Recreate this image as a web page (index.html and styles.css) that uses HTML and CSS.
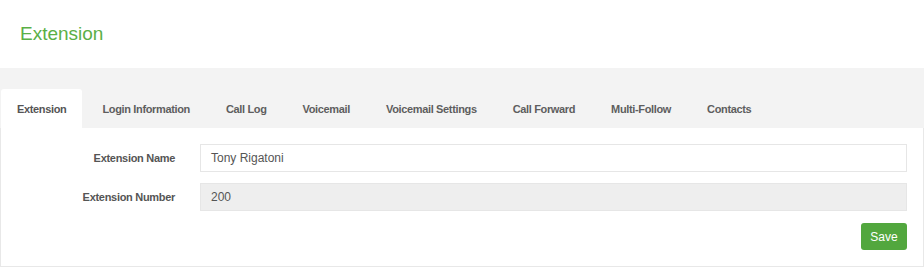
FILE: index.html
```html
<!DOCTYPE html>
<html>
<head>
<meta charset="utf-8">
<link rel="stylesheet" href="styles.css">
</head>
<body>
<header class="page-header">
  <h1 class="page-title">Extension</h1>
</header>
<div class="tab-band">
  <ul class="tabs">
    <li class="tab active">Extension</li>
    <li class="tab">Login Information</li>
    <li class="tab">Call Log</li>
    <li class="tab">Voicemail</li>
    <li class="tab">Voicemail Settings</li>
    <li class="tab">Call Forward</li>
    <li class="tab">Multi-Follow</li>
    <li class="tab">Contacts</li>
  </ul>
</div>
<section class="panel">
  <div class="form-row">
    <label class="form-label">Extension Name</label>
    <div class="form-field">Tony Rigatoni</div>
  </div>
  <div class="form-row">
    <label class="form-label">Extension Number</label>
    <div class="form-field readonly">200</div>
  </div>
  <div class="actions">
    <button class="btn-save">Save</button>
  </div>
</section>
</body>
</html>
```

FILE: styles.css
```css
* { box-sizing: border-box; }
html, body { margin: 0; padding: 0; background: #fff; }
body {
  font-family: "Liberation Sans", Arial, sans-serif;
  width: 924px;
  height: 267px;
  overflow: hidden;
}
.page-header {
  height: 68px;
  display: flex;
  align-items: center;
  padding: 0 0 1px 20px;
}
.page-title {
  margin: 0;
  font-size: 19px;
  font-weight: normal;
  color: #5aaf46;
}
.tab-band {
  background: #f3f3f3;
  padding-top: 21px;
}
.tabs {
  list-style: none;
  margin: 0;
  padding: 0 0 0 1px;
  display: flex;
  gap: 4px;
}
.tab {
  height: 39px;
  padding: 0 16px;
  display: flex;
  align-items: center;
  font-size: 11px;
  font-weight: bold;
  letter-spacing: -0.35px;
  color: #5e5e5e;
  border-radius: 3px 3px 0 0;
}
.tab.active {
  background: #fff;
  color: #555;
}
.panel {
  border: 1px solid #e8e8e8;
  border-top: none;
  height: 139px;
  padding: 16px 16px 0 0;
}
.form-row {
  display: flex;
  align-items: center;
  margin-bottom: 11px;
}
.form-label {
  width: 174px;
  text-align: right;
  font-size: 11px;
  font-weight: bold;
  letter-spacing: -0.3px;
  color: #555;
  margin-right: 25px;
}
.form-field {
  flex: 1;
  height: 28px;
  border: 1px solid #e6e6e6;
  background: #fff;
  display: flex;
  align-items: center;
  padding-left: 10px;
  font-size: 12px;
  color: #555;
}
.form-field.readonly {
  background: #eeeeee;
}
.actions {
  display: flex;
  justify-content: flex-end;
  padding-top: 1px;
}
.btn-save {
  width: 46px;
  height: 27px;
  border: none;
  border-radius: 3px;
  background: #52a73e;
  color: #fff;
  font-family: "Liberation Sans", Arial, sans-serif;
  font-size: 12px;
  padding: 0;
}
```
